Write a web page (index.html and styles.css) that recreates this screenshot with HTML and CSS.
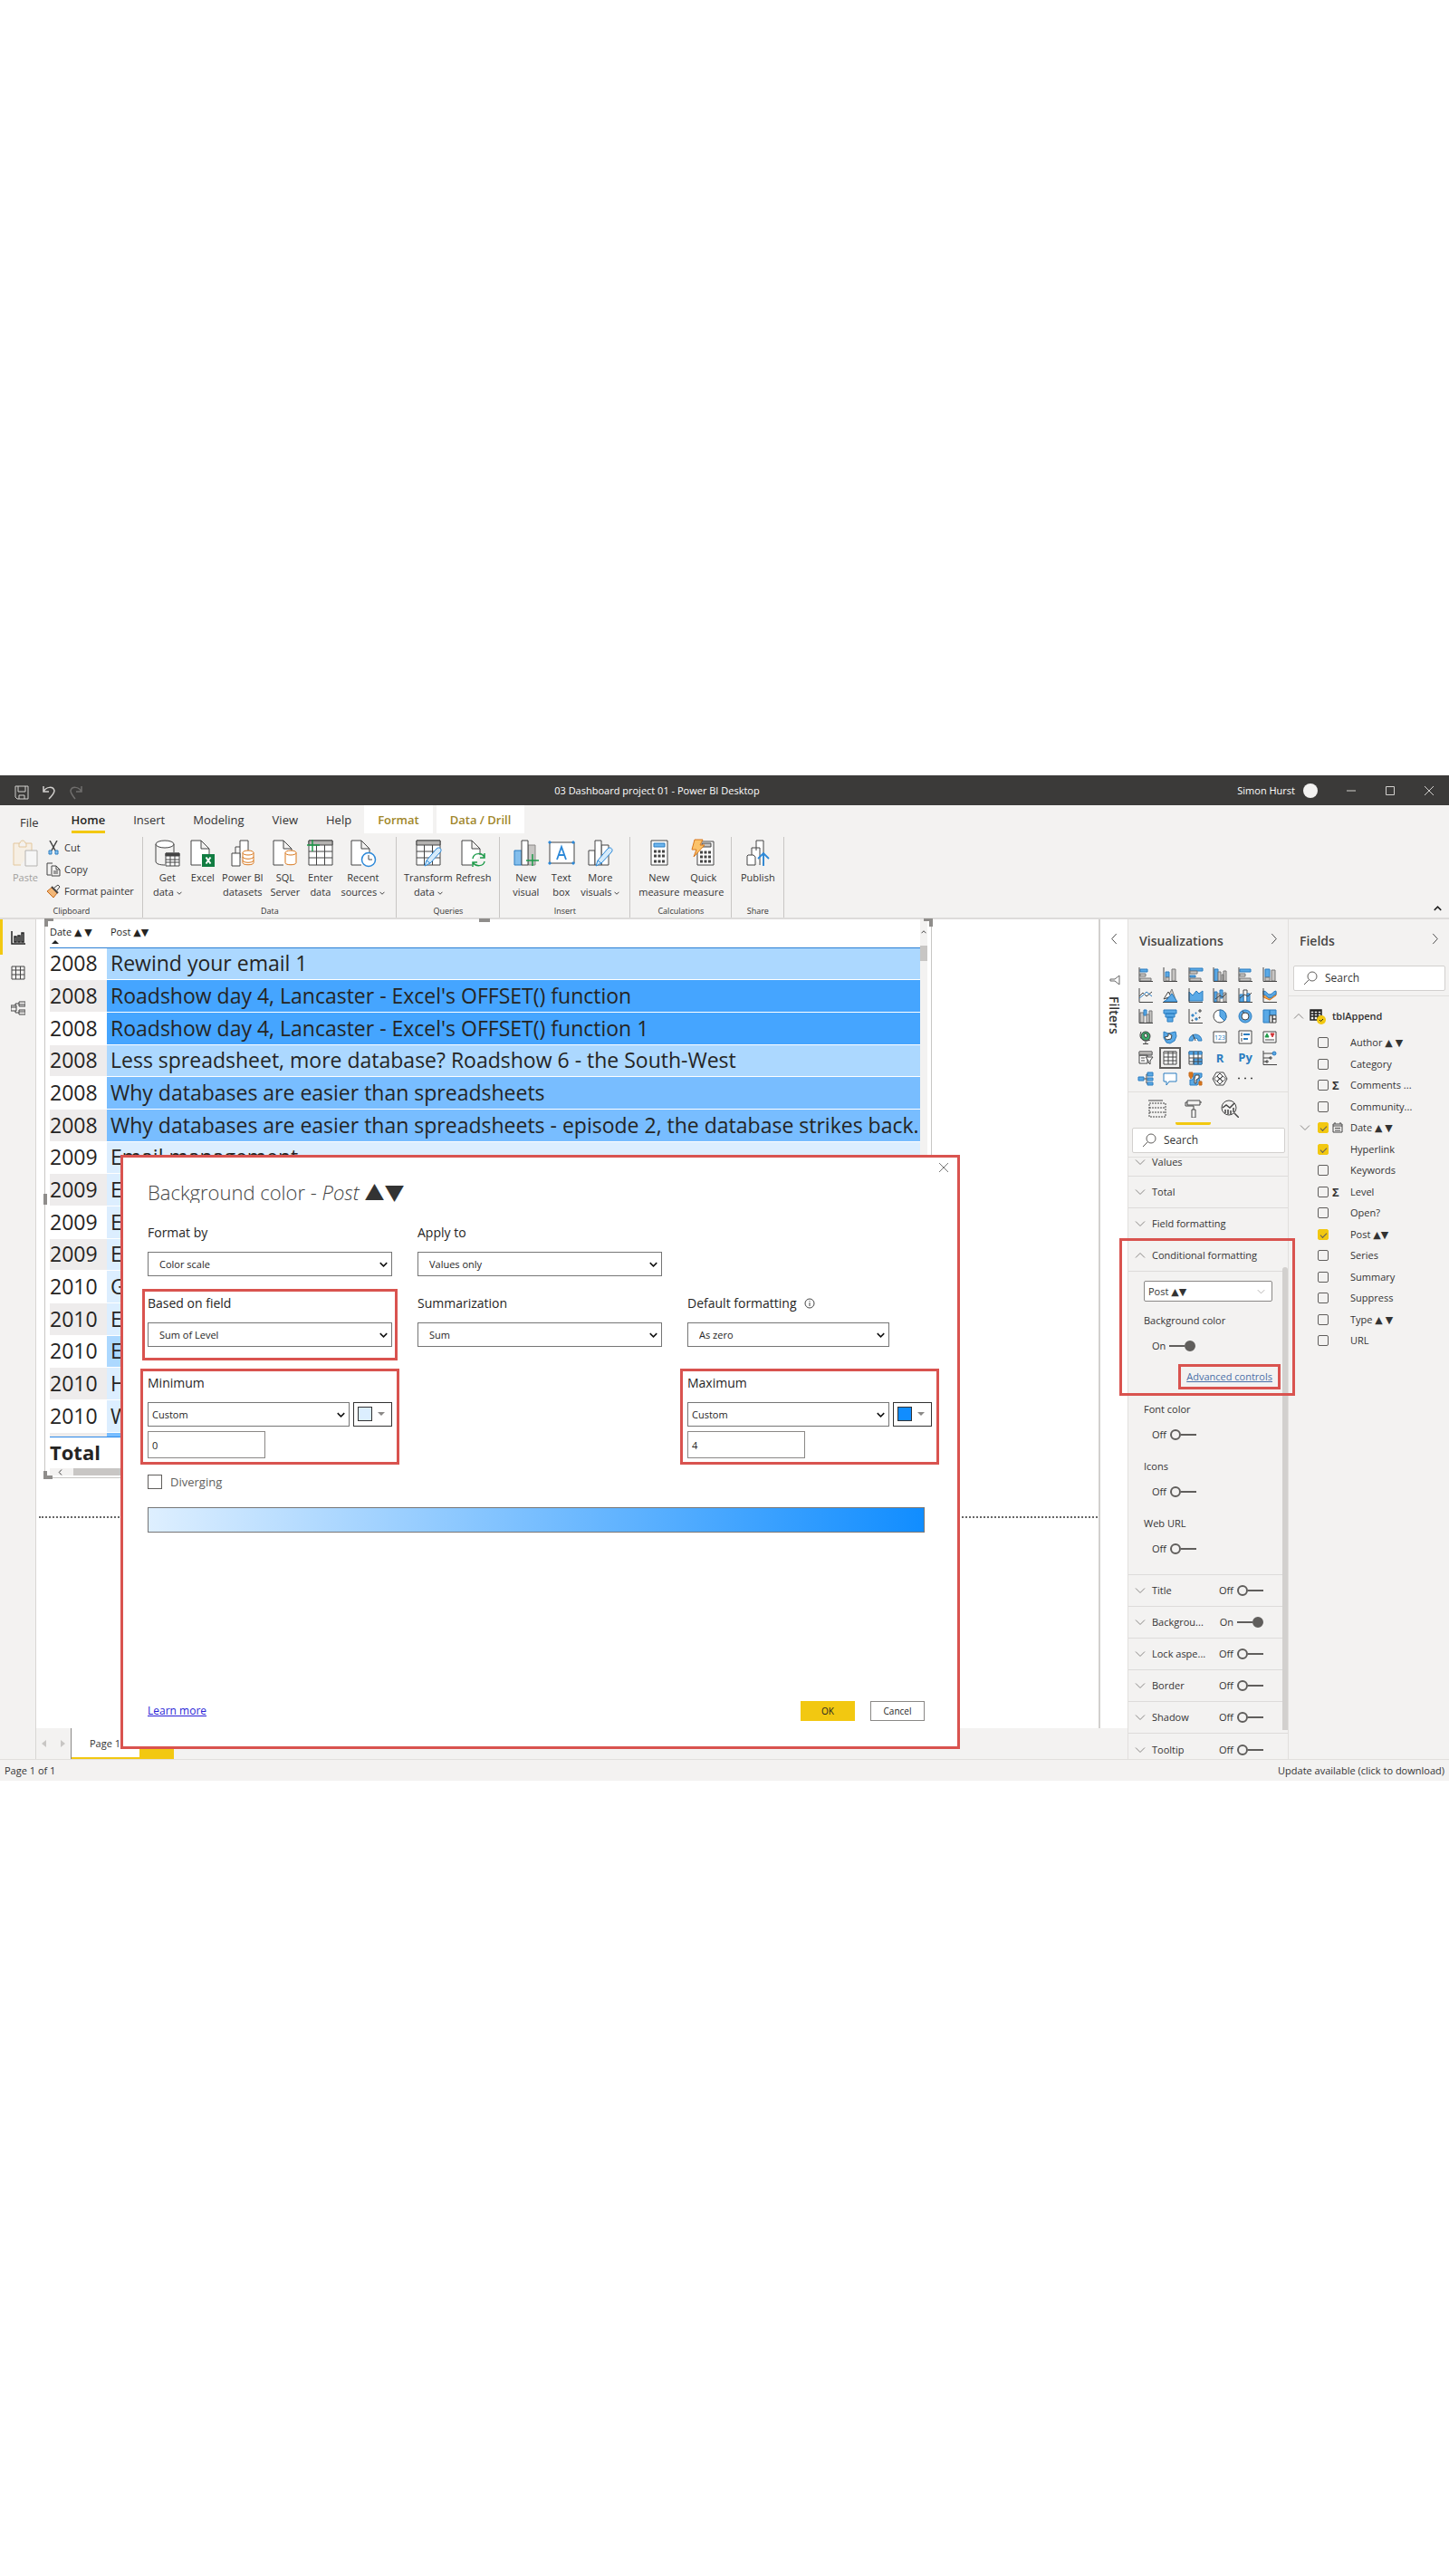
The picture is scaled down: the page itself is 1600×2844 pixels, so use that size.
FILE: index.html
```html
<!DOCTYPE html>
<html lang="en">
<head>
<meta charset="utf-8">
<title>03 Dashboard project 01 - Power BI Desktop</title>
<link rel="stylesheet" href="styles.css">
</head>
<body>
<svg class="defs" aria-hidden="true">
  <symbol id="chev" viewBox="0 0 12 8"><path d="M1 1.500l5 5 5-5"/></symbol>
  <symbol id="chevup" viewBox="0 0 12 8"><path d="M1 6.500l5-5 5 5"/></symbol>
  <symbol id="left" viewBox="0 0 8 14"><path d="M7 1L1.500 7 7 13"/></symbol>
  <symbol id="right" viewBox="0 0 8 14"><path d="M1 1l5.500 6L1 13"/></symbol>
  <symbol id="cross" viewBox="0 0 12 12"><path d="M1 1l10 10M11 1L1 11"/></symbol>
  <symbol id="lens" viewBox="0 0 16 16"><circle cx="10" cy="6" r="5"/><path d="M6.500 9.500L1 15"/></symbol>
  <symbol id="doc" viewBox="0 0 28 30"><path d="M12 28H1V1h11l9 9v7M12 1v9h9" fill="#fff"/></symbol>
  <symbol id="grid" viewBox="0 0 28 30"><path d="M1 1h26v27H1z" fill="#fff"/><path d="M1 1h26v5H1z" fill="#b5b3b1"/><path d="M1 13h26M1 20h26M9.500 6v22M18.500 6v22"/></symbol>
  <symbol id="pencil" viewBox="0 0 20 22"><path d="M1 21l2-6L14 2c3-3 7 1 4 4L7 18z" fill="#d6ebfa" stroke="#2b88d8"/><path d="M3 15l4 3" stroke="#2b88d8"/></symbol>
  <symbol id="db" viewBox="0 0 14 18"><path d="M1 3.500v11c0 3 12 3 12 0v-11" fill="#fff"/><ellipse cx="7" cy="3.500" rx="6" ry="2.500" fill="#fff"/></symbol>
</svg>

<div class="app">
  <header class="titlebar">
    <div class="quick">
      <button aria-label="Save"><svg class="s16" viewBox="0 0 16 16"><path d="M1 1h14v14H3l-2-2zM4 1v6h8V1M5 15v-4h6v4"/></svg></button>
      <button aria-label="Undo"><svg class="s16" viewBox="0 0 16 16"><path d="M2 1v6h6M2 7c3-6 11-6 12-1 0 3-3 6-6 9" stroke-width="1.500"/></svg></button>
      <button class="dim" aria-label="Redo"><svg class="s16" viewBox="0 0 16 16"><path d="M14 1v6H8M14 7c-3-6-11-6-12-1 0 3 2 5 5 9" stroke-width="1.500"/></svg></button>
    </div>
    <h1>03 Dashboard project 01 - Power BI Desktop</h1>
    <div class="winctl">
      <span>Simon Hurst</span><i class="avatar"></i>
      <button aria-label="Minimize"><svg class="s12" viewBox="0 0 12 12"><path d="M1 6h10"/></svg></button>
      <button aria-label="Maximize"><svg class="s12" viewBox="0 0 12 12"><path d="M1.500 1.500h9v9h-9z"/></svg></button>
      <button aria-label="Close"><svg class="s12"><use href="#cross"/></svg></button>
    </div>
  </header>

  <nav class="tabs">
    <a class="file" href="#">File</a><a class="on" href="#">Home</a><a href="#">Insert</a><a href="#">Modeling</a><a href="#">View</a><a href="#">Help</a><a class="ctx" href="#">Format</a><a class="ctx wide" href="#">Data / Drill</a>
  </nav>

  <div class="ribbon">
    <section class="grp g-clip">
      <div class="tools">
        <button class="cmd off"><svg class="s30" viewBox="0 0 28 30"><path d="M9 28H1V4h7c0-4 6-4 6 0h7v8M7 4v4h8V4" fill="#f6efe4" stroke="#e3c79c"/><path d="M14 12h13v17H14z" fill="#f6f6f6" stroke="#b5b3b1"/></svg><span>Paste</span></button>
        <div class="minis">
          <button><svg class="s16" viewBox="0 0 16 16"><path d="M4 0l6 11M12 0L6 11" stroke-width="1.500"/><path d="M3 11h3v4H3zM10 11h3v4h-3z" fill="#8cc4f0" stroke="#2b7cc0"/></svg>Cut</button>
          <button><svg class="s16" viewBox="0 0 16 16"><path d="M5 14H1V1h6M6 4h5l4 4v7H6zM11 4v4h4M8 10h5M8 12h5"/></svg>Copy</button>
          <button><svg class="s16" viewBox="0 0 16 16"><path d="M9 4l4-3 2 2-3 4" /><path d="M6 3l7 7M6 4L1 8l7 7 4-5z" fill="#f2b778" stroke="#c66b1d"/><path d="M6 3l7 7" stroke-width="2"/></svg>Format painter</button>
        </div>
      </div>
      <h2>Clipboard</h2>
    </section>
    <section class="grp">
      <div class="tools">
        <button class="cmd w40"><svg class="s30" viewBox="0 0 28 30"><path d="M1 5v19c0 3 5 4 10 4M21 5v9" /><ellipse cx="11" cy="5" rx="10" ry="4" fill="#fff"/><path d="M12 15h15v14H12z" fill="#fff"/><path d="M12 15h15v3H12z" fill="#444"/><path d="M12 22h15M12 25h15M17 15v14M22 15v14"/></svg><span>Get<br>data <svg class="cv"><use href="#chev"/></svg></span></button>
        <button class="cmd w38"><svg class="s30" viewBox="0 0 28 30"><use href="#doc" width="28" height="30"/><path d="M13 16h14v14H13z" fill="#107c41" stroke="none"/><path d="M17.500 19.500l5 7M22.500 19.500l-5 7" stroke="#fff" stroke-width="2"/></svg><span>Excel</span></button>
        <button class="cmd w50"><svg class="s30" viewBox="0 0 28 30"><path d="M11 20V1h9v11M6 15V8h5" fill="#fff"/><path d="M2 15h9v14H2z" fill="#fff"/><g stroke="#d8761b"><use href="#db" x="13" y="11" width="14" height="18"/><path d="M14 19c1 3 11 3 12 0M14 23c1 3 11 3 12 0"/></g></svg><span>Power BI<br>datasets</span></button>
        <button class="cmd w44"><svg class="s30" viewBox="0 0 28 30"><use href="#doc" width="28" height="30"/><g stroke="#d8761b"><use href="#db" x="13" y="11" width="14" height="18"/></g></svg><span>SQL<br>Server</span></button>
        <button class="cmd w34"><svg class="s30" viewBox="0 0 28 30"><use href="#grid" width="28" height="30"/><path d="M5 0v13M-1 6h14" stroke="#1e9b4a" stroke-width="1.500"/></svg><span>Enter<br>data</span></button>
        <button class="cmd w60"><svg class="s30" viewBox="0 0 28 30"><use href="#doc" width="28" height="30"/><circle cx="20" cy="22" r="7.500" fill="#fff" stroke="#2b88d8" stroke-width="1.500"/><path d="M20 17v5h4"/></svg><span>Recent<br>sources <svg class="cv"><use href="#chev"/></svg></span></button>
      </div>
      <h2>Data</h2>
    </section>
    <section class="grp">
      <div class="tools">
        <button class="cmd w56"><svg class="s30" viewBox="0 0 28 30"><use href="#grid" width="28" height="30"/><use href="#pencil" x="9" y="8" width="20" height="22"/></svg><span>Transform<br>data <svg class="cv"><use href="#chev"/></svg></span></button>
        <button class="cmd w44"><svg class="s30" viewBox="0 0 28 30"><use href="#doc" width="28" height="30"/><path d="M13 21c1-7 11-7 13-1M26 15v5h-5M26 24c-1 6-10 6-13 1M13 30v-5h5" stroke="#1e9b4a" stroke-width="1.500"/></svg><span>Refresh</span></button>
      </div>
      <h2>Queries</h2>
    </section>
    <section class="grp">
      <div class="tools">
        <button class="cmd w44"><svg class="s30" viewBox="0 0 28 30"><path d="M1 12h8v16H1z" fill="#83beec" stroke="#2b7cc0"/><path d="M16 6h8v22h-8z" fill="#c8c6c4" stroke="#8a8886"/><path d="M9 1h7v27H9z" fill="#fff"/><path d="M21 16v13M14 23h14" stroke="#1e9b4a" stroke-width="1.500"/></svg><span>New<br>visual</span></button>
        <button class="cmd w34"><svg class="s30" viewBox="0 0 28 30"><path d="M1 3h27v23H1z" fill="#fff"/><path d="M9 22l5-14 5 14M11 17h6" stroke="#2b88d8" stroke-width="1.800"/><path d="M0 2h2v2H0zM26 2h2v2h-2zM0 25h2v2H0zM26 25h2v2h-2z" fill="#2b88d8" stroke="#2b88d8"/></svg><span>Text<br>box</span></button>
        <button class="cmd w52"><svg class="s30" viewBox="0 0 28 30"><path d="M1 12h7v16H1zM15 6h8v22h-8z" fill="#fff"/><path d="M8 1h7v27H8z" fill="#fff"/><use href="#pencil" x="8" y="8" width="20" height="22"/></svg><span>More<br>visuals <svg class="cv"><use href="#chev"/></svg></span></button>
      </div>
      <h2>Insert</h2>
    </section>
    <section class="grp">
      <div class="tools">
        <button class="cmd w50"><svg class="s30" viewBox="0 0 28 30"><path d="M5 1h18v27H5z" fill="#fff"/><path d="M8 4h12v4H8z" fill="#6db5ee" stroke="#2b7cc0"/><path d="M8 13h12M8 18h12M8 24h12" stroke-width="3" stroke-dasharray="3 1.500"/></svg><span>New<br>measure</span></button>
        <button class="cmd w48"><svg class="s30" viewBox="0 0 28 30"><path d="M7 2h18v26H7z" fill="#fff"/><path d="M12 4h10v4H12z" fill="#c8c6c4"/><path d="M10 14h12M10 19h12M10 24h12" stroke-width="3" stroke-dasharray="3 1.500"/><path d="M4 0h9l-3 6h5L3 19l3-8H1z" fill="#fbc36a" stroke="#d8761b"/></svg><span>Quick<br>measure</span></button>
      </div>
      <h2>Calculations</h2>
    </section>
    <section class="grp">
      <div class="tools">
        <button class="cmd w44"><svg class="s30" viewBox="0 0 28 30"><path d="M12 12V1h8v27M7 17V9h9v19" fill="#fff"/><path d="M2 18l1-1h6l2 2v9H2z" fill="#fff"/><path d="M20 29V15M14 21l6-6 6 6" stroke="#2b88d8" stroke-width="1.800"/></svg><span>Publish</span></button>
      </div>
      <h2>Share</h2>
    </section>
    <button class="fold" aria-label="Collapse ribbon"><svg class="cv"><use href="#chevup"/></svg></button>
  </div>

  <main class="work">
    <nav class="views">
      <a class="on" href="#" aria-label="Report"><svg class="s16" viewBox="0 0 16 16"><path d="M1 1v14h15M4 7h2v6H4zM8 6h2v7H8zM12 3h2v10h-2z" stroke-width="1.500"/></svg></a>
      <a href="#" aria-label="Data"><svg class="s16" viewBox="0 0 16 16"><path d="M1 1h14v14H1zM1 5h14M1 10h14M5.500 1v14M10.500 1v14"/></svg></a>
      <a href="#" aria-label="Model"><svg class="s16" viewBox="0 0 16 16"><path d="M9 1h7v5H9zM9 10h7v5H9zM0 5h6v6H0zM9 3H5v2M9 13H5v-2M9 4h7M9 12h7M0 7h6"/></svg></a>
    </nav>

    <div class="center">
      <div class="stage">
        <div class="canvas">
          <div class="visual">
            <i class="h tl"></i><i class="h tm"></i><i class="h tr"></i><i class="h ml"></i><i class="h bl"></i>
            <div class="vrow">
              <table>
                <thead><tr><th>Date ▲ ▼<svg class="sort" viewBox="0 0 8 4"><path d="M0 4l4-4 4 4z"/></svg></th><th>Post ▲▼</th></tr></thead>
                <tbody>
                  <tr><td>2008</td><td class="l2">Rewind your email 1</td></tr>
                  <tr><td>2008</td><td class="l4">Roadshow day 4, Lancaster - Excel's OFFSET() function</td></tr>
                  <tr><td>2008</td><td class="l4">Roadshow day 4, Lancaster - Excel's OFFSET() function 1</td></tr>
                  <tr><td>2008</td><td class="l2">Less spreadsheet, more database? Roadshow 6 - the South-West</td></tr>
                  <tr><td>2008</td><td class="l3">Why databases are easier than spreadsheets</td></tr>
                  <tr><td>2008</td><td class="l3">Why databases are easier than spreadsheets - episode 2, the database strikes back.</td></tr>
                  <tr><td>2009</td><td>Email management</td></tr>
                  <tr><td>2009</td><td>E</td></tr>
                  <tr><td>2009</td><td>E</td></tr>
                  <tr><td>2009</td><td>E</td></tr>
                  <tr><td>2010</td><td>G</td></tr>
                  <tr><td>2010</td><td>E</td></tr>
                  <tr><td>2010</td><td class="l2">E</td></tr>
                  <tr><td>2010</td><td>H</td></tr>
                  <tr><td>2010</td><td>W</td></tr>
                  <tr class="peek"><td></td><td class="l3"></td></tr>
                </tbody>
                <tfoot><tr><td colspan="2">Total</td></tr></tfoot>
              </table>
              <div class="vbar"><svg class="cv"><use href="#chevup"/></svg><i></i></div>
            </div>
            <div class="hbar"><svg class="lt"><use href="#left"/></svg><i></i></div>
          </div>
          <div class="pagebreak"></div>
        </div>
        <aside class="filters">
          <button aria-label="Expand filters"><svg class="ar"><use href="#left"/></svg></button>
          <svg class="s12 fun" viewBox="0 0 12 12"><path d="M11 1v10L6 7H1V5h5z"/></svg>
          <h2>Filters</h2>
        </aside>
      </div>
      <div class="pages">
        <div class="nudge"><i class="pl"></i><i class="pr"></i></div>
        <a class="page" href="#">Page 1</a><button class="add" aria-label="New page"></button>
      </div>
    </div>

    <aside class="viz">
      <div class="phead"><h2>Visualizations</h2><button aria-label="Collapse"><svg class="ar"><use href="#right"/></svg></button></div>
      <div class="gallery">
        <svg viewBox="0 0 16 16"><path class="b" d="M2 2h8v3H2z"/><path class="g" d="M2 7h6v3H2zM8 12h6v3H2v-3z"/><path d="M1 0v15.500h15"/></svg>
        <svg viewBox="0 0 16 16"><path class="b" d="M3 5h4v6H3z"/><path class="g" d="M3 11h4v4H3zM10 2h4v13h-4z"/><path d="M1 0v15.500h15"/></svg>
        <svg viewBox="0 0 16 16"><path class="b" d="M2 1h14v3H2zM2 9h6v2H2z"/><path class="g" d="M2 4h8v3H2zM2 12h12v3H2z"/><path d="M1 0v15.500h15"/></svg>
        <svg viewBox="0 0 16 16"><path class="b" d="M2 2h4v13H2z"/><path class="g" d="M6 5h3v10H6zM10 8h2v7h-2zM12 4h3v11h-3z"/><path d="M1 0v15.500h15"/></svg>
        <svg viewBox="0 0 16 16"><path class="b" d="M2 2h12v3H2z"/><path class="g" d="M2 7h6v3H2zM2 12h12v3H2z"/><path d="M1 0v15.500h15"/></svg>
        <svg viewBox="0 0 16 16"><path class="b" d="M3 2h5v9H3z"/><path class="g" d="M3 11h5v4H3zM10 3h4v12h-4z"/><path d="M1 0v15.500h15"/></svg>

        <svg viewBox="0 0 16 16"><path d="M1 0v15.500h15"/><path d="M1 9l4-4 4 4 6-5"/><path class="bs" d="M1 11l4-3 4-4 6 5"/></svg>
        <svg viewBox="0 0 16 16"><path class="g" d="M4 12l6-11 5 14z"/><path class="w" d="M1 12l5-8 3 5z"/><path class="b" d="M1 15l4-3 5-6 6 9z"/><path d="M0 15.500h16"/></svg>
        <svg viewBox="0 0 16 16"><path class="b" d="M1 4l4 4 4-5 3 3 4-3v11H1z"/><path d="M1 0v15.500h15"/></svg>
        <svg viewBox="0 0 16 16"><path class="b" d="M2 4h3v11H2zM8 2h3v9H8z"/><path class="g" d="M5 6h3v9H5zM12 5h3v10h-3z"/><path d="M1 0v15.500h15M3 12l5-4 3 2 4-4"/></svg>
        <svg viewBox="0 0 16 16"><path class="w" d="M6 2h4v13H6z"/><path class="b" d="M2 7h4v8H2zM10 6h3v9h-3z"/><path d="M1 0v15.500h15M2 11l5-4 4 2 4-4"/></svg>
        <svg viewBox="0 0 16 16"><path class="o" d="M1 3l7 8 7-7v4l-7 5-7-3z"/><path class="b" d="M1 3c4 0 4 4 7 4s4-4 7-4v4c-3 0-4 4-7 4S5 7 1 7z"/><path d="M1 0v15.500h15"/></svg>

        <svg viewBox="0 0 16 16"><path class="g" d="M2 4h4v11H2zM12 2h3v13h-3z"/><path class="b" d="M6 1h3v6H6z"/><path class="g" d="M9 6h3v9H9z"/><path d="M1 0v15.500h15"/></svg>
        <svg viewBox="0 0 16 16"><path class="b" d="M1 1h14v4H1zM3 5h10v4H3zM5 9h6v5H5z"/></svg>
        <svg viewBox="0 0 16 16"><path d="M1 0v15.500h15"/><path d="M12 1h2v2h-2zM4 12h1v1H4zM12 9h1v1h-1z"/><path class="b" d="M4 6h2v2H4zM8 4h1v1H8zM8 10h2v2H8z"/></svg>
        <svg viewBox="0 0 16 16"><circle class="w" cx="8" cy="8" r="7"/><path class="b" d="M8 8V1a7 7 0 0 1 5 12z"/></svg>
        <svg viewBox="0 0 16 16"><circle class="b" cx="8" cy="8" r="7"/><circle class="w" cx="8" cy="8" r="4"/><path class="w" d="M5 2l2 3"/></svg>
        <svg viewBox="0 0 16 16"><path class="b" d="M1 1h7v14H1zM8 1h7v6H8z"/><path class="w" d="M8 7h3v8H8zM11 7h4v4h-4zM11 11h4v4h-4z"/></svg>

        <svg viewBox="0 0 16 16"><circle class="gr" cx="8" cy="7" r="5"/><path d="M3 2c-4 8 4 12 10 9M5 15.500h6M8 13v2"/><path class="w" d="M6 5l3-1 1 3-2 2z"/></svg>
        <svg viewBox="0 0 16 16"><path class="b" d="M1 2l5 2 8-2 1 5-2 5-5 3-4-1-3-5z"/><path class="w" d="M6 4l4 2-1 4-5 1-2-3 4-1z"/></svg>
        <svg viewBox="0 0 16 16"><path class="b" d="M1 12a7 7 0 0 1 14 0h-4a3 3 0 0 0-6 0z"/><path d="M8 12L5 5"/></svg>
        <svg viewBox="0 0 16 16"><path class="w" d="M1 2h14v12H1z"/><text class="num" x="8" y="11">123</text></svg>
        <svg viewBox="0 0 16 16"><path class="w" d="M1 1h14v14H1z"/><path class="bs" d="M6 5h7M6 10h5" stroke-width="2"/><path d="M4 3v4M4 9v4"/></svg>
        <svg viewBox="0 0 16 16"><path class="w" d="M1 2h14v12H1z"/><path d="M3 8l2-4 2 4z" fill="#1e9b4a" stroke="#1e9b4a"/><path d="M9 4h4l-2 4z" fill="#d13438" stroke="#d13438"/><path d="M3 11h10"/></svg>

        <svg viewBox="0 0 16 16"><path class="w" d="M1 1h14v4H1zM1 5h9v9H1z"/><path class="g" d="M1 1h14v3H1z"/><path d="M3 8h4M3 11h4"/><path class="w" d="M8 7h8l-3 4v4l-2-2v-2z"/></svg>
        <svg class="picked" viewBox="0 0 16 16"><path class="w" d="M1 1h14v14H1z"/><path class="g" d="M1 1h14v2H1z"/><path d="M1 7h14M1 11h14M6 1v14M11 1v14"/></svg>
        <svg viewBox="0 0 16 16"><path class="w" d="M1 1h14v14H1z"/><path class="b" d="M1 1h14v3H1zM6 9h9v6H6z"/><path d="M1 8h14M1 12h14M6 1v14M11 1v14"/></svg>
        <svg viewBox="0 0 16 16"><text class="rp" x="8" y="13">R</text></svg>
        <svg viewBox="0 0 16 16"><text class="rp" x="8" y="12">Py</text></svg>
        <svg viewBox="0 0 16 16"><path d="M1 0v15.500h15M1 3h12M1 8h8M1 12h4"/><circle class="b" cx="13" cy="3" r="2"/><path d="M8 7h2v2H8zM4 11h2v2H4z"/></svg>

        <svg viewBox="0 0 16 16"><path d="M5 8h4M9 3v10M9 3h2M9 13h2"/><path class="b" d="M0 6h6v4H0zM10 1h6v4h-6zM10 7h6v3h-6zM10 12h6v3h-6z"/></svg>
        <svg viewBox="0 0 16 16"><path class="w bs" d="M1 2h14v9H7l-3 4v-4H1z"/></svg>
        <svg viewBox="0 0 16 16"><path class="b" d="M6 2h9v4l-3 2 1 3-3 4H2V9h3z"/><path class="w" d="M8 4h4v3l-3 2v4H7V8z"/><path d="M1 1h4v4L3 8 1 5zM12 11h3v4h-3z" fill="#d8761b" stroke="#c66b1d"/></svg>
        <svg viewBox="0 0 16 16"><path class="w" d="M4 1h8l4 7-4 7H4L0 8z"/><path class="w" d="M8 2l3 3-3 3-3-3zM8 8l3 3-3 3-3-3zM4.500 5l3 3-3 3-3-3zM11.500 5l3 3-3 3-3-3z"/></svg>
        <svg viewBox="0 0 16 16"><path d="M0 7.500h2M7 7.500h2M14 7.500h2" stroke-width="1.500"/></svg>
      </div>
      <div class="modes">
        <button aria-label="Fields"><svg class="s20" viewBox="0 0 20 20"><path d="M0 1h16"/><path d="M1 4h18v15H1zM1 9h18M1 14h18" stroke-dasharray="2 1"/></svg></button>
        <button class="on" aria-label="Format"><svg class="s20" viewBox="0 0 20 20"><path d="M3 1h14v5H3zM3 3H1v4h9v4M8 11h4v9H8zM17 3h2"/></svg></button>
        <button aria-label="Analytics"><svg class="s20" viewBox="0 0 20 20"><circle cx="9" cy="9" r="8"/><path d="M15 15l5 5M2 9l4-3 4 3 5-5M5 15v-4M8 16v-5M11 16v-4M14 14v-5" stroke-width="1.500"/></svg></button>
      </div>
      <label class="search"><svg class="s16"><use href="#lens"/></svg><input type="search" placeholder="Search" aria-label="Search formatting"></label>
      <div class="props">
        <div class="prop first"><svg class="pc"><use href="#chev"/></svg><span>Values</span></div>
        <div class="prop"><svg class="pc"><use href="#chev"/></svg><span>Total</span></div>
        <div class="prop"><svg class="pc"><use href="#chev"/></svg><span>Field formatting</span></div>
        <div class="prop"><svg class="pc"><use href="#chevup"/></svg><span>Conditional formatting</span></div>
        <div class="cond">
          <div class="sel small"><select aria-label="Column"><option>Post ▲▼</option></select><svg><use href="#chev"/></svg></div>
          <h3>Background color</h3>
          <label class="tog">On<input type="checkbox" checked></label>
          <a class="adv" href="#">Advanced controls</a>
          <h3>Font color</h3>
          <label class="tog">Off<input type="checkbox"></label>
          <h3>Icons</h3>
          <label class="tog">Off<input type="checkbox"></label>
          <h3>Web URL</h3>
          <label class="tog">Off<input type="checkbox"></label>
        </div>
        <div class="prop"><svg class="pc"><use href="#chev"/></svg><span>Title</span><label class="tog">Off<input type="checkbox"></label></div>
        <div class="prop"><svg class="pc"><use href="#chev"/></svg><span>Backgrou...</span><label class="tog">On<input type="checkbox" checked></label></div>
        <div class="prop"><svg class="pc"><use href="#chev"/></svg><span>Lock aspe...</span><label class="tog">Off<input type="checkbox"></label></div>
        <div class="prop"><svg class="pc"><use href="#chev"/></svg><span>Border</span><label class="tog">Off<input type="checkbox"></label></div>
        <div class="prop"><svg class="pc"><use href="#chev"/></svg><span>Shadow</span><label class="tog">Off<input type="checkbox"></label></div>
        <div class="prop last"><svg class="pc"><use href="#chev"/></svg><span>Tooltip</span><label class="tog">Off<input type="checkbox"></label></div>
        <i class="scroll"></i>
        <i class="mark m-cond"></i>
      </div>
    </aside>

    <aside class="fields">
      <div class="phead"><h2>Fields</h2><button aria-label="Collapse"><svg class="ar"><use href="#right"/></svg></button></div>
      <label class="search"><svg class="s16"><use href="#lens"/></svg><input type="search" placeholder="Search" aria-label="Search fields"></label>
      <div class="tbl"><svg class="pc"><use href="#chevup"/></svg><svg class="ti" viewBox="0 0 18 18"><path d="M1 2h12v11H1zM1 3h12M1 6h12M1 9h12M5 2v11M9 2v11" stroke="#222" stroke-width="1.500"/><circle cx="13" cy="13" r="5" fill="#f2c811" stroke="none"/><path d="M11 13l1.500 1.500L15 12" stroke="#222"/></svg><b>tblAppend</b></div>
      <ul>
        <li><label><input type="checkbox"><i></i>Author ▲ ▼</label></li>
        <li><label><input type="checkbox"><i></i>Category</label></li>
        <li><label><input type="checkbox"><i>Σ</i>Comments ...</label></li>
        <li><label><input type="checkbox"><i></i>Community...</label></li>
        <li class="open"><svg class="pc"><use href="#chev"/></svg><label><input type="checkbox" checked><i><svg class="s12" viewBox="0 0 12 12"><path d="M1 2h10v9H1zM1 4h10M3 0v2M9 0v2M3 6.500h6M3 9h6" /></svg></i>Date ▲ ▼</label></li>
        <li><label><input type="checkbox" checked><i></i>Hyperlink</label></li>
        <li><label><input type="checkbox"><i></i>Keywords</label></li>
        <li><label><input type="checkbox"><i>Σ</i>Level</label></li>
        <li><label><input type="checkbox"><i></i>Open?</label></li>
        <li><label><input type="checkbox" checked><i></i>Post ▲▼</label></li>
        <li><label><input type="checkbox"><i></i>Series</label></li>
        <li><label><input type="checkbox"><i></i>Summary</label></li>
        <li><label><input type="checkbox"><i></i>Suppress</label></li>
        <li><label><input type="checkbox"><i></i>Type ▲ ▼</label></li>
        <li><label><input type="checkbox"><i></i>URL</label></li>
      </ul>
    </aside>

    <div class="dialog" role="dialog" aria-labelledby="dt">
      <button class="x" aria-label="Close"><svg class="s12"><use href="#cross"/></svg></button>
      <h2 id="dt">Background color - <em>Post</em> <span>▲▼</span></h2>
      <div class="form">
        <div class="fld"><label for="f1">Format by</label><div class="sel"><select id="f1"><option>Color scale</option></select><svg><use href="#chev"/></svg></div></div>
        <div class="fld"><label for="f2">Apply to</label><div class="sel"><select id="f2"><option>Values only</option></select><svg><use href="#chev"/></svg></div></div>
        <div></div>
        <div class="fld mk1"><label for="f3">Based on field</label><div class="sel"><select id="f3"><option>Sum of Level</option></select><svg><use href="#chev"/></svg></div></div>
        <div class="fld"><label for="f4">Summarization</label><div class="sel"><select id="f4"><option>Sum</option></select><svg><use href="#chev"/></svg></div></div>
        <div class="fld"><label for="f5">Default formatting <svg class="s12" viewBox="0 0 12 12"><circle cx="6" cy="6" r="5"/><path d="M6 5v4M6 3v1"/></svg></label><div class="pair"><div class="sel"><select id="f5"><option>As zero</option></select><svg><use href="#chev"/></svg></div></div></div>
        <div class="fld mk2"><label for="f6">Minimum</label><div class="pair"><div class="sel tight"><select id="f6"><option>Custom</option></select><svg><use href="#chev"/></svg></div><button class="color" aria-label="Minimum color"><i></i><b></b></button></div><input type="text" value="0" aria-label="Minimum value"></div>
        <div></div>
        <div class="fld mk2"><label for="f7">Maximum</label><div class="pair"><div class="sel tight"><select id="f7"><option>Custom</option></select><svg><use href="#chev"/></svg></div><button class="color max" aria-label="Maximum color"><i></i><b></b></button></div><input type="text" value="4" aria-label="Maximum value"></div>
      </div>
      <label class="div"><input type="checkbox">Diverging</label>
      <div class="ramp"></div>
      <footer><a href="#">Learn more</a><button class="ok">OK</button><button>Cancel</button></footer>
    </div>
  </main>
  <footer class="status"><span>Page 1 of 1</span><a href="#">Update available (click to download)</a></footer>
</div>
</body>
</html>
```
FILE: styles.css
```css
*, *::before, *::after { box-sizing: border-box; }
body { margin: 0; padding-top: 856px; background: #fff; font: 11px/16px "Open Sans", "Noto Sans", "DejaVu Sans", sans-serif; color: #333; }
h1, h2, h3, ul { margin: 0; padding: 0; font-weight: 400; font-size: inherit; }
button { border: 0; padding: 0; background: none; font: inherit; color: inherit; }
a { color: inherit; text-decoration: none; }
input, select { font: inherit; color: inherit; margin: 0; }
svg { fill: none; stroke: #444; display: block; flex: none; }
.defs { position: absolute; width: 0; height: 0; }
.s12 { width: 12px; height: 12px; }
.s16 { width: 16px; height: 16px; }
.s20 { width: 20px; height: 20px; }
.s30 { width: 28px; height: 30px; overflow: visible; }
.cv { width: 6px; height: 4px; stroke-width: 2; display: inline-block; vertical-align: middle; }
.ar { width: 8px; height: 13px; }
.pc { width: 12px; height: 8px; stroke: #8a8886; }

.titlebar { height: 33px; background: #3b3a39; color: #fff; display: grid; grid-template-columns: 4fr auto 5fr; align-items: center; padding: 0 16px; }
.titlebar svg { stroke: #d2d0ce; }
.quick { display: flex; gap: 14px; padding-top: 4px; }
.quick .dim { opacity: .35; }
.winctl { display: flex; align-items: center; justify-content: flex-end; gap: 31px; }
.winctl span { margin-right: -22px; }
.avatar { width: 16px; height: 16px; border-radius: 50%; background: #f3f2f1; }

.tabs { display: flex; height: 31px; background: #f3f2f1; font-size: 13px; line-height: 32px; padding-left: 22px; }
.tabs a { margin-right: 31px; height: 31px; }
.tabs .file { padding-top: 3px; margin-right: 36px; }
.tabs .on { font-weight: 600; border-bottom: 3px solid #f2c811; color: #252423; }
.tabs .ctx { background: #fff; font-weight: 600; color: #a08629; padding: 0 15px; margin: 0 4px 0 0; }
.tabs a:nth-child(6) { margin-right: 14px; }

.ribbon { display: flex; background: #f3f2f1; height: 95px; padding: 4px 8px 0 0; border-bottom: 2px solid #dddbda; }
.grp { display: flex; flex-direction: column; justify-content: space-between; border-right: 1px solid #c8c6c4; padding: 3px 6px 0 7px; }
.grp h2 { font-size: 9px; line-height: 14px; text-align: center; }
.g-clip { padding: 3px 9px 0 10px; }
.tools { display: flex; }
.cmd { display: flex; flex-direction: column; align-items: center; gap: 4px; }
.cmd span { white-space: nowrap; text-align: center; }
.cmd.off { color: #a19f9d; width: 36px; margin-right: 5px; }
.w34 { width: 34px; } .w38 { width: 38px; } .w40 { width: 40px; } .w44 { width: 44px; } .w48 { width: 48px; } .w50 { width: 50px; } .w52 { width: 52px; } .w56 { width: 56px; } .w60 { width: 60px; }
.minis { display: flex; flex-direction: column; gap: 8px; padding-top: 1px; }
.minis button { display: flex; gap: 4px; height: 16px; white-space: nowrap; }
.fold { margin-left: auto; align-self: flex-end; padding-bottom: 3px; }
.fold svg { width: 9px; height: 6px; stroke: #222; stroke-width: 2; }

.work { position: relative; display: grid; grid-template-columns: 40px minmax(0, 1fr) 177px 177px; background: #f3f2f1; border-bottom: 1px solid #e1dfdd; }
.views { border-right: 1px solid #d8d6d4; }
.views a { display: grid; place-items: center; height: 39px; border-left: 3px solid transparent; padding-right: 3px; }
.views .on { border-color: #f2c811; }
.views .on svg { stroke: #222; }
.center { display: flex; flex-direction: column; }
.stage { flex: 1; display: flex; background: #fff; }
.canvas { flex: 1; min-width: 0; border-right: 2px solid #d2d0ce; }
.visual { position: relative; margin: 0 184px 0 9px; border: 1px solid #c8c6c4; border-top: 0; padding: 0 4px 2px 5px; }
.h { position: absolute; border: 0 solid #8f8d8b; width: 10px; height: 9px; }
.tl { left: -1px; top: -1px; border-width: 3px 0 0 4px; }
.tm { left: 49%; top: -1px; border-top-width: 4px; height: 4px; width: 12px; }
.tr { right: -2px; top: -1px; border-width: 3px 4px 0 0; }
.ml { left: -2px; top: 303px; border-left-width: 4px; width: 4px; height: 12px; }
.bl { left: -2px; bottom: -2px; border-width: 0 0 4px 4px; }
.vrow { display: flex; }
table { flex: 1; min-width: 0; border-collapse: collapse; table-layout: fixed; font-size: 23px; color: #252423; }
th { font-weight: 400; font-size: 11px; line-height: 18px; text-align: left; padding: 5px 0 0 4px; height: 31px; vertical-align: top; border-bottom: 1px solid #2b7fd4; white-space: nowrap; }
th:first-child { width: 63px; padding-left: 0; }
.sort { width: 8px; height: 4px; fill: #222; stroke: none; margin: 0 0 0 2px; }
td { height: 36px; padding: 0 0 1px 4px; line-height: 28px; white-space: nowrap; overflow: hidden; border-bottom: 1px solid rgba(255,255,255,.5); background: #dceeff; }
tr:nth-child(3n+1) td { height: 35px; }
td:first-child { padding-left: 0; background: #fff; }
tr:nth-child(even) td:first-child { background: #eeecec; }
td.l2 { background: #acd8ff; } td.l3 { background: #78bdff; } td.l4 { background: #45a5ff; }
tbody tr.peek:nth-child(n) td { height: 5px; padding: 0; border-bottom: 1px solid #2b88e8; line-height: 0; }
tfoot tr:nth-child(n) td { font-weight: 700; font-size: 22px; height: 35px; border: 0; background: #fff; }
.vbar { width: 8px; background: #f3f2f1; display: flex; flex-direction: column; align-items: center; padding-top: 12px; }
.vbar i { width: 8px; height: 17px; background: #c8c6c4; margin-top: 13px; }
.hbar { height: 8px; background: #f3f2f1; display: flex; align-items: center; }
.lt { width: 5px; height: 7px; margin: 0 12px 0 9px; stroke-width: 2; }
.hbar i { width: 420px; height: 8px; background: #c8c6c4; }
.pagebreak { margin: 42px 1px 0 3px; border-top: 2px dotted #666; }
.filters { width: 31px; border-right: 1px solid #e1dfdd; display: flex; flex-direction: column; align-items: center; padding-top: 15px; }
.fun { margin: 33px 0 12px 2px; stroke: #666; }
.filters h2 { writing-mode: vertical-rl; font-size: 14px; font-weight: 600; line-height: 18px; }
.pages { height: 34px; display: flex; border-right: 1px solid #e1dfdd; }
.nudge { width: 39px; border-right: 1px solid #8a8886; display: flex; gap: 16px; align-items: center; justify-content: center; }
.pl, .pr { border: 4px solid transparent; border-right: 5px solid #c8c6c4; border-left: 0; }
.pr { border-right: 0; border-left: 5px solid #c8c6c4; }
.page { width: 75px; background: #fff; border-bottom: 2px solid #f2c811; padding-left: 20px; line-height: 34px; }
.add { width: 38px; background: #f2c811; }

.viz { border-right: 1px solid #e1dfdd; }
.phead { display: flex; justify-content: space-between; align-items: flex-start; padding: 13px 11px 0 12px; height: 50px; }
.phead h2 { font-size: 14px; line-height: 22px; font-weight: 600; color: #484644; }
.phead button { padding-top: 2px; }
.gallery { display: grid; grid-template-columns: repeat(6, 1fr); grid-auto-rows: 16px; row-gap: 7px; margin: 3px 6px 6px 5px; justify-items: center; }
.gallery svg { width: 16px; height: 16px; overflow: visible; }
.b { fill: #5aa9e6; stroke: #2b7cc0; } .g { fill: #c8c6c4; stroke: #777; } .w { fill: #fff; } .o { fill: #f2a04a; stroke: #d8761b; } .gr { fill: #3aa869; } .bs { stroke: #2b7cc0; }
.num { font-size: 7px; fill: #2b7cc0; stroke: none; text-anchor: middle; }
.rp { font-size: 13px; font-weight: 700; fill: #2b7cc0; stroke: none; text-anchor: middle; }
.picked { outline: 2px solid #605e5c; outline-offset: 2px; }
.modes { display: flex; gap: 1px; border-top: 1px solid #e1dfdd; padding-left: 12px; height: 37px; }
.modes button { width: 39px; display: grid; place-items: center; border-bottom: 3px solid transparent; padding-top: 2px; }
.modes .on { border-color: #f2c811; border-radius: 2px; }
.search { display: flex; align-items: center; gap: 8px; height: 28px; margin: 3px 3px 4px 4px; padding-left: 10px; background: #fff; border: 1px solid #d2d0ce; border-radius: 2px; font-size: 12px; }
.search input { border: 0; background: none; width: 100%; padding: 0; outline: 0; }
.search input::placeholder { color: #333; opacity: 1; }
.search svg { stroke: #605e5c; }
.props { position: relative; border-top: 1px solid #e1dfdd; }
.prop { display: flex; align-items: center; gap: 7px; height: 35px; padding-left: 7px; border-bottom: 1px solid #dddbda; }
.prop.first { height: 21px; padding-bottom: 10px; }
.prop.last { height: 28px; border: 0; padding-top: 7px; }
.prop .tog { margin-left: auto; padding: 0 27px 0 0; }
.cond { padding: 10px 17px 20px; border-bottom: 1px solid #dddbda; display: flex; flex-direction: column; align-items: flex-start; }
.cond h3 { margin: 13px 0 12px; }
.cond .tog { padding-left: 9px; }
.cond .tog + h3 { margin-top: 19px; }
.cond .sel { align-self: stretch; }
.adv { position: relative; align-self: flex-end; color: #4a6fa8; text-decoration: underline; margin: 18px 0 7px; }
.adv::after { content: ""; position: absolute; inset: -6px -9px; border: 3px solid #d9534f; }
.tog { display: flex; align-items: center; gap: 4px; height: 16px; }
.tog input { appearance: none; width: 29px; height: 12px; background: linear-gradient(#605e5c, #605e5c) 12px 5px / 17px 2px no-repeat; display: flex; }
.tog input::before { content: ""; width: 12px; height: 12px; border: 2px solid #605e5c; border-radius: 50%; }
.tog input:checked { justify-content: flex-end; background-position: 0 5px; }
.tog input:checked::before { background: #605e5c; }
.scroll { position: absolute; right: 0; top: 121px; bottom: 32px; width: 6px; background: #d2d0ce; border-radius: 3px 3px 0 0; }
.mark { position: absolute; border: 3px solid #d9534f; pointer-events: none; }
.m-cond { left: -10px; right: -8px; top: 89px; height: 174px; }

.fields .search { margin: 1px 4px 5px 5px; }
.tbl { display: flex; align-items: center; gap: 6px; border-top: 1px solid #e1dfdd; padding: 4px 0 0 5px; height: 40px; }
.tbl b { font-weight: 600; margin-left: 1px; }
.ti { width: 18px; height: 18px; }
.fields ul { list-style: none; }
.fields li { height: 24px; display: flex; align-items: center; justify-content: flex-end; }
.fields li:nth-child(even) { height: 23px; }
.fields li label { width: 145px; display: flex; align-items: center; }
.fields li .pc { margin-right: 8px; }
.fields li i { width: 24px; padding-left: 4px; font: 700 13px/16px "Open Sans", sans-serif; }
.fields li input { appearance: none; width: 12px; height: 12px; border: 1px solid #605e5c; border-radius: 2px; display: grid; place-items: center; }
.fields li input:checked { background: #f2c811; border-color: #f2c811; }
.fields li input:checked::before { content: ""; width: 7px; height: 4px; border: solid #605e5c; border-width: 0 0 1px 1px; transform: rotate(-45deg); }

.dialog { position: absolute; left: 133px; right: 540px; top: 260px; border: 3px solid #d9534f; background: #fff; padding: 24px 36px 28px 27px; color: #252423; }
.dialog .x { position: absolute; right: 9px; top: 5px; }
.dialog .x svg { stroke: #777; }
.dialog h2 { font-size: 22px; line-height: 28px; height: 26px; overflow: hidden; font-weight: 300; color: #444; }
.dialog h2 span { color: #333; font-family: "Noto Sans CJK JP", sans-serif; line-height: 1px; }
.form { display: grid; grid-template-columns: repeat(3, 270px); column-gap: 28px; padding-top: 23px; }
.fld { position: relative; display: flex; flex-direction: column; height: 78px; }
.fld label { font-size: 14px; line-height: 20px; padding-bottom: 11px; display: flex; gap: 8px; align-items: center; }
.sel { display: grid; flex: 1; align-items: center; }
.fld > .sel { flex: none; }
.sel > * { grid-area: 1 / 1; }
.sel select { appearance: none; width: 100%; height: 27px; border: 1px solid #767676; border-radius: 0; background: #fff; padding: 0 12px; }
.sel svg { justify-self: end; width: 9px; height: 6px; margin-right: 5px; stroke: #111; stroke-width: 2; }
.sel.tight select { padding: 0 4px; }
.sel.small select { height: 23px; padding: 0 4px; border-radius: 2px; border-color: #8a8886; }
.sel.small svg { stroke: #a19f9d; stroke-width: 1; margin-right: 8px; }
.pair { display: flex; gap: 4px; padding-right: 47px; }
.mk2 .pair { padding: 0; }
.mk1::after, .mk2::after { content: ""; position: absolute; inset: -6px -6px 5px; border: 3px solid #d9534f; pointer-events: none; }
.mk2 { margin-top: 10px; height: 93px; }
.mk2::after { inset: -6px -8px -7px; }
.mk2 input { width: 130px; height: 30px; margin-top: 5px; padding: 0 4px; border: 1px solid #8a8886; }
.color { width: 43px; height: 27px; border: 1px solid #333; display: flex; align-items: center; justify-content: space-between; padding: 0 7px 2px 4px; }
.color i { width: 16px; height: 16px; border: 1px solid #333; background: #dceeff; }
.color.max i { background: #118dff; }
.color b { border: 4px solid transparent; border-top-color: #8a8886; border-bottom: 0; }
.div { display: flex; align-items: center; gap: 9px; font-size: 13px; margin-top: 18px; color: #605e5c; }
.div input { appearance: none; width: 16px; height: 16px; border: 1px solid #605e5c; }
.ramp { height: 28px; margin-top: 20px; border: 1px solid #767676; background: linear-gradient(90deg, #deefff, #118dff); }
.dialog footer { display: flex; gap: 17px; align-items: center; margin-top: 186px; }
.dialog footer a { color: #2a1fd6; text-decoration: underline; margin-right: auto; font-size: 12px; }
.dialog footer button { width: 60px; height: 22px; border: 1px solid #8a8886; font-size: 10px; }
.dialog footer .ok { background: #f2c811; border-color: #f2c811; }
.status { display: flex; justify-content: space-between; height: 23px; padding: 4px 5px; background: #f3f2f1; }
```
